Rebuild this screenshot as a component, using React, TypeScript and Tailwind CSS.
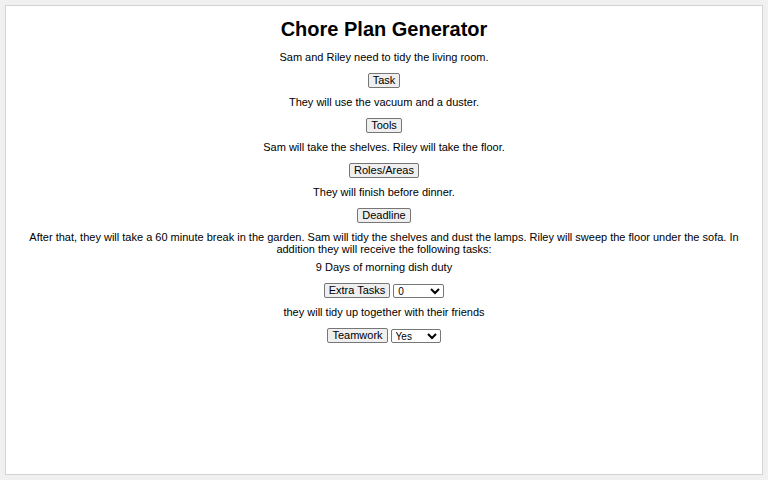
import React from "react";

function App() {
  const steps = [
    { text: "Sam and Riley need to tidy the living room.", button: "Task" },
    { text: "They will use the vacuum and a duster.", button: "Tools" },
    { text: "Sam will take the shelves. Riley will take the floor.", button: "Roles/Areas" },
    { text: "They will finish before dinner.", button: "Deadline" },
  ];

  const btn = "h-[15px] leading-[13px] px-[4px] bg-[#efefef] border border-[#767676] rounded-[2px] text-[11px]";

  return (
    <div className="w-[768px] h-[480px] bg-[#f0f0f0] p-[5px]" style={{ fontFamily: '"Liberation Sans", Arial, sans-serif' }}>
      <div className="h-full bg-white border border-[#d4d4d4] flex flex-col items-center px-[14px] text-[11px] leading-[13px] text-black">
        <h1 className="text-[20px] leading-[24px] font-bold mt-[11px] mb-[10px]">Chore Plan Generator</h1>
        {steps.map((s) => (
          <div key={s.button} className="flex flex-col items-center">
            <p className="mb-[9px]">{s.text}</p>
            <button className={btn + " mb-[8px]"}>{s.button}</button>
          </div>
        ))}
        <p className="text-center mb-[6px] leading-[12px]">
          After that, they will take a 60 minute break in the garden. Sam will tidy the shelves and dust the lamps. Riley will sweep the floor under the
          sofa. In addition they will receive the following tasks:
        </p>
        <p className="mb-[9px]">9 Days of morning dish duty</p>
        <div className="flex items-center gap-[3px] mb-[8px]">
          <button className={btn}>Extra Tasks</button>
          <select className="w-[51px] h-[14px] text-[10px] leading-[12px] border border-[#767676] rounded-[2px] bg-white">
            <option>0</option>
          </select>
        </div>
        <p className="mb-[9px]">they will tidy up together with their friends</p>
        <div className="flex items-center gap-[3px]">
          <button className={btn}>Teamwork</button>
          <select className="w-[50px] h-[14px] text-[10px] leading-[12px] border border-[#767676] rounded-[2px] bg-white">
            <option>Yes</option>
          </select>
        </div>
      </div>
    </div>
  );
}

export default App;
